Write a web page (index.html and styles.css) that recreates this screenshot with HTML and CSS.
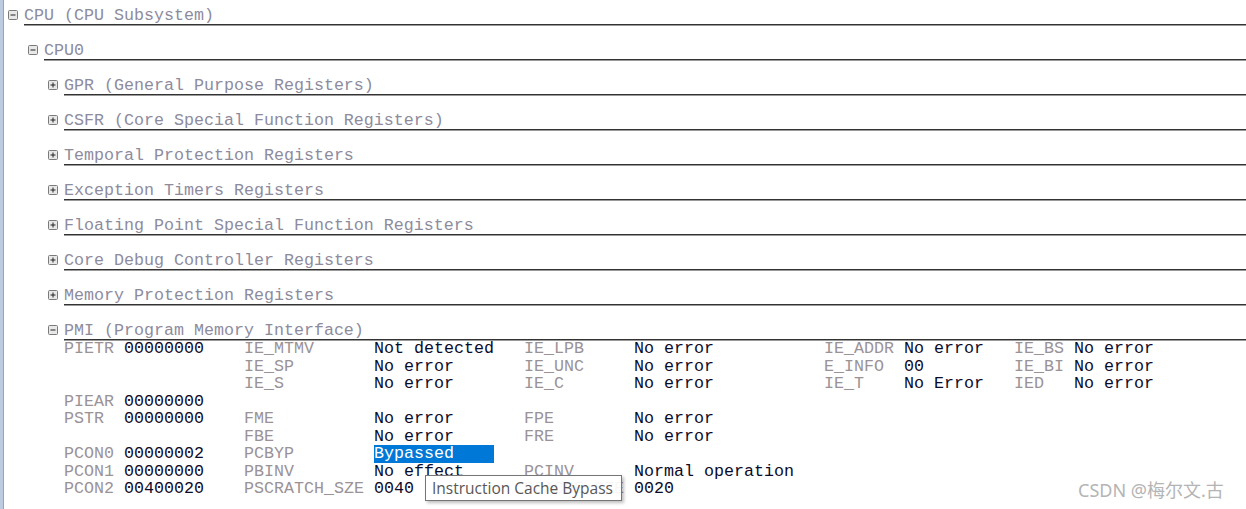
FILE: index.html
```html
<!DOCTYPE html>
<html lang="en">
<head>
    <meta charset="UTF-8">
    <title>CPU Registers</title>
    <link rel="stylesheet" href="styles.css">
</head>
<body>
    <div class="panel">
        <div class="node level0">
            <svg class="toggle" width="10" height="10" viewBox="0 0 10 10"><rect x="0.5" y="0.5" width="9" height="9" rx="1" fill="#e8e8e8" stroke="#7a7a7a"/><path d="M2.5 5h5" stroke="#222"/></svg>
            <div class="title">CPU (CPU Subsystem)</div>
        </div>
        <div class="node level1">
            <svg class="toggle" width="10" height="10" viewBox="0 0 10 10"><rect x="0.5" y="0.5" width="9" height="9" rx="1" fill="#e8e8e8" stroke="#7a7a7a"/><path d="M2.5 5h5" stroke="#222"/></svg>
            <div class="title">CPU0</div>
        </div>
        <div class="node level2">
            <svg class="toggle" width="10" height="10" viewBox="0 0 10 10"><rect x="0.5" y="0.5" width="9" height="9" rx="1" fill="#e8e8e8" stroke="#7a7a7a"/><path d="M2.5 5h5M5 2.5v5" stroke="#222"/></svg>
            <div class="title">GPR (General Purpose Registers)</div>
        </div>
        <div class="node level2">
            <svg class="toggle" width="10" height="10" viewBox="0 0 10 10"><rect x="0.5" y="0.5" width="9" height="9" rx="1" fill="#e8e8e8" stroke="#7a7a7a"/><path d="M2.5 5h5M5 2.5v5" stroke="#222"/></svg>
            <div class="title">CSFR (Core Special Function Registers)</div>
        </div>
        <div class="node level2">
            <svg class="toggle" width="10" height="10" viewBox="0 0 10 10"><rect x="0.5" y="0.5" width="9" height="9" rx="1" fill="#e8e8e8" stroke="#7a7a7a"/><path d="M2.5 5h5M5 2.5v5" stroke="#222"/></svg>
            <div class="title">Temporal Protection Registers</div>
        </div>
        <div class="node level2">
            <svg class="toggle" width="10" height="10" viewBox="0 0 10 10"><rect x="0.5" y="0.5" width="9" height="9" rx="1" fill="#e8e8e8" stroke="#7a7a7a"/><path d="M2.5 5h5M5 2.5v5" stroke="#222"/></svg>
            <div class="title">Exception Timers Registers</div>
        </div>
        <div class="node level2">
            <svg class="toggle" width="10" height="10" viewBox="0 0 10 10"><rect x="0.5" y="0.5" width="9" height="9" rx="1" fill="#e8e8e8" stroke="#7a7a7a"/><path d="M2.5 5h5M5 2.5v5" stroke="#222"/></svg>
            <div class="title">Floating Point Special Function Registers</div>
        </div>
        <div class="node level2">
            <svg class="toggle" width="10" height="10" viewBox="0 0 10 10"><rect x="0.5" y="0.5" width="9" height="9" rx="1" fill="#e8e8e8" stroke="#7a7a7a"/><path d="M2.5 5h5M5 2.5v5" stroke="#222"/></svg>
            <div class="title">Core Debug Controller Registers</div>
        </div>
        <div class="node level2">
            <svg class="toggle" width="10" height="10" viewBox="0 0 10 10"><rect x="0.5" y="0.5" width="9" height="9" rx="1" fill="#e8e8e8" stroke="#7a7a7a"/><path d="M2.5 5h5M5 2.5v5" stroke="#222"/></svg>
            <div class="title">Memory Protection Registers</div>
        </div>
        <div class="node level2 open">
            <svg class="toggle" width="10" height="10" viewBox="0 0 10 10"><rect x="0.5" y="0.5" width="9" height="9" rx="1" fill="#e8e8e8" stroke="#7a7a7a"/><path d="M2.5 5h5" stroke="#222"/></svg>
            <div class="title">PMI (Program Memory Interface)</div>
        </div>

        <!-- PMI register fields -->
        <div class="regs">
            <div class="reg-row">
                <span class="lbl">PIETR</span><span class="val">00000000</span>
                <span class="lbl">IE_MTMV</span><span class="val">Not detected</span>
                <span class="lbl">IE_LPB</span><span class="val">No error</span>
                <span class="lbl">IE_ADDR</span><span class="val">No error</span>
                <span class="lbl">IE_BS</span><span class="val">No error</span>
            </div>
            <div class="reg-row">
                <span></span><span></span>
                <span class="lbl">IE_SP</span><span class="val">No error</span>
                <span class="lbl">IE_UNC</span><span class="val">No error</span>
                <span class="lbl">E_INFO</span><span class="val">00</span>
                <span class="lbl">IE_BI</span><span class="val">No error</span>
            </div>
            <div class="reg-row">
                <span></span><span></span>
                <span class="lbl">IE_S</span><span class="val">No error</span>
                <span class="lbl">IE_C</span><span class="val">No error</span>
                <span class="lbl">IE_T</span><span class="val">No Error</span>
                <span class="lbl">IED</span><span class="val">No error</span>
            </div>
            <div class="reg-row">
                <span class="lbl">PIEAR</span><span class="val">00000000</span>
            </div>
            <div class="reg-row">
                <span class="lbl">PSTR</span><span class="val">00000000</span>
                <span class="lbl">FME</span><span class="val">No error</span>
                <span class="lbl">FPE</span><span class="val">No error</span>
            </div>
            <div class="reg-row">
                <span></span><span></span>
                <span class="lbl">FBE</span><span class="val">No error</span>
                <span class="lbl">FRE</span><span class="val">No error</span>
            </div>
            <div class="reg-row">
                <span class="lbl">PCON0</span><span class="val">00000002</span>
                <span class="lbl">PCBYP</span><span class="val"><span class="selected">Bypassed</span></span>
            </div>
            <div class="reg-row">
                <span class="lbl">PCON1</span><span class="val">00000000</span>
                <span class="lbl">PBINV</span><span class="val">No effect</span>
                <span class="lbl">PCINV</span><span class="val">Normal operation</span>
            </div>
            <div class="reg-row">
                <span class="lbl">PCON2</span><span class="val">00400020</span>
                <span class="lbl">PSCRATCH_SZE</span><span class="val">0040</span>
                <span class="lbl">PCACHE_SZE</span><span class="val">0020</span>
            </div>
        </div>
    </div>

    <div class="tooltip">Instruction Cache Bypass</div>
    <div class="watermark">CSDN @梅尔文.古</div>
</body>
</html>
```

FILE: styles.css
```css
body {
    margin: 0;
    height: 509px;
    overflow: hidden;
    background-color: #ffffff;
    border-left: 3px solid #bccbe0;
    box-sizing: border-box;
    font-family: 'Liberation Mono', 'DejaVu Sans Mono', monospace;
    font-size: 16.67px;
}

.panel {
    height: 100%;
    border-left: 1px solid #a2a2a2;
    padding-left: 4px;
}

.node {
    display: flex;
    align-items: flex-start;
    height: 35px;
}

.level1 {
    padding-left: 20px;
}

.level2 {
    padding-left: 40px;
}

.toggle {
    flex: none;
    margin-top: 10px;
    margin-right: 6px;
}

.title {
    flex: 1;
    padding-top: 7px;
    line-height: 17px;
    color: #8e8b9c;
    border-bottom: 1px solid #333333;
    box-shadow: 0 1px 0 #9a9a9a;
    white-space: nowrap;
}

.regs {
    margin-top: -10px;
    padding-left: 56px;
}

.reg-row {
    display: grid;
    grid-template-columns: 60px 120px 130px 150px 110px 190px 80px 110px 60px 1fr;
    height: 17.5px;
    line-height: 17.5px;
    white-space: nowrap;
}

.lbl {
    color: #9b9296;
}

.val {
    color: #0b0b2a;
}

.selected {
    display: inline-block;
    width: 120px;
    background-color: #0078d7;
    color: #ffffff;
}

.tooltip {
    position: absolute;
    left: 425px;
    top: 475px;
    width: 197px;
    height: 26px;
    box-sizing: border-box;
    border: 1px solid #767676;
    background-color: rgba(255, 255, 255, 0.92);
    box-shadow: 2px 2px 3px rgba(0, 0, 0, 0.25);
    font-family: 'Open Sans', 'Noto Sans', sans-serif;
    font-size: 15.5px;
    line-height: 24px;
    color: #575757;
    padding-left: 6px;
    white-space: nowrap;
}

.watermark {
    position: absolute;
    left: 1078px;
    top: 476px;
    font-family: 'Noto Sans', 'Noto Sans CJK SC', sans-serif;
    font-size: 18px;
    color: #b4b4b4;
}
```
